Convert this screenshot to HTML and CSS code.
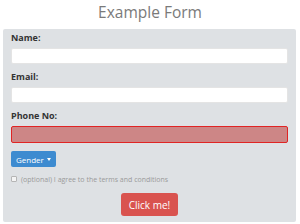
FILE: index.html
```html
<!DOCTYPE html>
<html lang="en">
<head>
    <meta charset="UTF-8">
    <title>Example Form</title>
    <link rel="stylesheet" href="styles.css">
</head>
<body>
<h1>Example Form</h1>

<form class="panel">
    <div class="field">
        <label for="name">Name:</label>
        <input type="text" id="name">
    </div>
    <div class="field">
        <label for="email">Email:</label>
        <input type="text" id="email">
    </div>
    <div class="field">
        <label for="phone">Phone No:</label>
        <input type="text" id="phone" class="invalid">
    </div>
    <div class="dropdown">
        <button type="button" class="btn-gender">Gender <span class="caret"></span></button>
    </div>
    <div class="terms">
        <input type="checkbox" id="terms">
        <label for="terms">(optional) I agree to the terms and conditions</label>
    </div>
    <div class="actions">
        <button type="button" class="btn-submit">Click me!</button>
    </div>
</form>
</body>
</html>
```

FILE: styles.css
```css
/* General Styles */
body {
    margin: 0;
    background: #ffffff;
    font-family: 'Open Sans', sans-serif;
    color: #333;
}

h1 {
    margin: 0;
    height: 29px;
    line-height: 24px;
    text-align: center;
    font-size: 15.5px;
    font-weight: normal;
    color: #7a7a7a;
}

.panel {
    margin: 0 4px 0 3px;
    padding: 2px 8px 6px 8px;
    background: #dee1e4;
    border-radius: 2px;
}

.field {
    margin-bottom: 6px;
}

.field label {
    display: block;
    font-size: 9px;
    font-weight: bold;
    line-height: 14px;
    margin-bottom: 3px;
    color: #333;
}

.field input {
    display: block;
    box-sizing: border-box;
    width: 100%;
    height: 16px;
    margin: 0;
    border: 1px solid #e4e4e4;
    border-radius: 2px;
    background: #ffffff;
}

.field input.invalid {
    height: 17px;
    background: #cd8686;
    border-color: #e02424;
}

.dropdown {
    display: flex;
    margin-top: 8px;
}

.btn-gender {
    display: flex;
    align-items: center;
    gap: 3px;
    height: 16px;
    padding: 0 5px;
    border: none;
    border-radius: 2px;
    background: #3d8bd0;
    color: #ffffff;
    font-family: 'Open Sans', sans-serif;
    font-size: 8px;
}

.caret {
    width: 0;
    height: 0;
    border-top: 3px solid #ffffff;
    border-left: 2px solid transparent;
    border-right: 2px solid transparent;
}

.terms {
    display: flex;
    align-items: center;
    height: 12px;
    margin-top: 6px;
}

.terms input {
    appearance: none;
    box-sizing: border-box;
    width: 6px;
    height: 6px;
    margin: 0 4px 0 0;
    border: 1px solid #b5b5b5;
    border-radius: 1px;
    background: #f4f4f4;
}

.terms label {
    font-size: 7px;
    color: #9a9a9a;
}

.actions {
    display: flex;
    justify-content: center;
    margin-top: 8px;
}

.btn-submit {
    height: 23px;
    padding: 0 8px;
    border: none;
    border-radius: 3px;
    background: #d9534f;
    color: #ffffff;
    font-family: 'Open Sans', sans-serif;
    font-size: 10px;
}
```
